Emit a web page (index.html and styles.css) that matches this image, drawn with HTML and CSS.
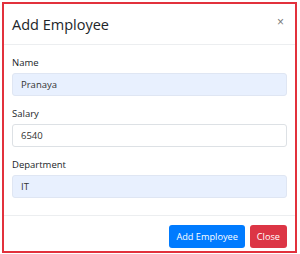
FILE: index.html
```html
<!DOCTYPE html>
<html lang="en">
  <head>
    <meta charset="UTF-8" />
    <meta name="viewport" content="width=device-width, initial-scale=1.0" />
    <title>Add Employee</title>
    <link rel="stylesheet" href="styles.css">
  </head>
  <body>
    <div class="modal">
      <div class="modal-header">
        <h5 class="modal-title">Add Employee</h5>
        <button class="close" type="button">&times;</button>
      </div>

      <div class="modal-body">
        <div class="form-group">
          <label for="name">Name</label>
          <input type="text" id="name" class="autofill" value="Pranaya" />
        </div>

        <div class="form-group">
          <label for="salary">Salary</label>
          <input type="text" id="salary" value="6540" />
        </div>

        <div class="form-group">
          <label for="department">Department</label>
          <input type="text" id="department" class="autofill" value="IT" />
        </div>
      </div>

      <div class="modal-footer">
        <button class="btn btn-primary" type="button">Add Employee</button>
        <button class="btn btn-danger" type="button">Close</button>
      </div>
    </div>
  </body>
</html>
```

FILE: styles.css
```css
body {
  margin: 0;
  padding: 2px;
  background: #fff;
  font-family: "Open Sans", "Noto Sans", sans-serif;
  color: #212529;
}
.modal {
  box-sizing: border-box;
  width: 295px;
  height: 251px;
  border: 2px solid #e2313c;
  display: flex;
  flex-direction: column;
}
.modal-header {
  height: 40px;
  padding: 0 8px;
  border-bottom: 1px solid #eceef0;
  display: flex;
  align-items: center;
  justify-content: space-between;
}
.modal-title {
  margin: 0;
  font-size: 14.5px;
  font-weight: 400;
  color: #212529;
}
.close {
  border: none;
  background: none;
  padding: 0;
  margin: 0 3px 4px 0;
  font-family: "Liberation Sans", sans-serif;
  font-size: 12px;
  color: #7a7a7a;
  line-height: 1;
}
.modal-body {
  padding: 10px 8px 17px;
  display: flex;
  flex-direction: column;
  gap: 10px;
}
.form-group {
  display: flex;
  flex-direction: column;
}
label {
  font-size: 9.5px;
  line-height: 15px;
  margin-bottom: 3px;
  color: #212529;
}
input {
  box-sizing: border-box;
  height: 23px;
  padding: 0 8px;
  border: 1px solid #dde1e5;
  border-radius: 3px;
  font-family: inherit;
  font-size: 9.5px;
  color: #333;
  background: #fff;
}
input.autofill {
  background: #e8f0fe;
  border-color: #dfe6f3;
}
.modal-footer {
  border-top: 1px solid #eceef0;
  padding: 9px 8px 0;
  display: flex;
  justify-content: flex-end;
  gap: 5px;
}
.btn {
  height: 23px;
  padding: 0 7px;
  border: none;
  border-radius: 3px;
  font-family: inherit;
  font-size: 9.2px;
  color: #fff;
}
.btn-primary {
  background: #007bff;
}
.btn-danger {
  background: #dc3545;
}
```
